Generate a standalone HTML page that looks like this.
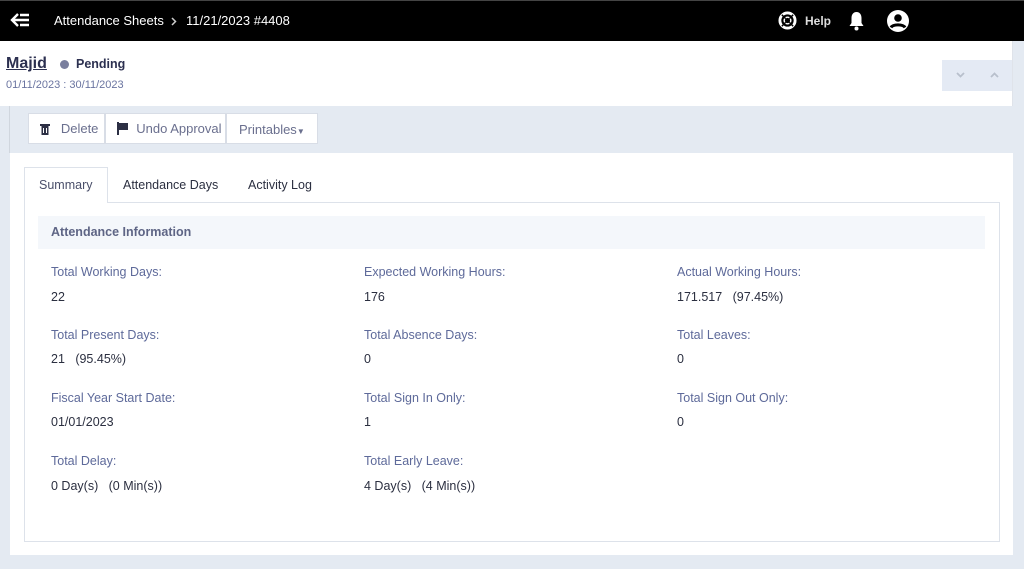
<!DOCTYPE html>
<html><head><style>
*{box-sizing:border-box;margin:0;padding:0}
body{width:1024px;height:569px;overflow:hidden;background:#e4eaf2;font-family:"Liberation Sans",sans-serif;position:relative}
.top{position:absolute;left:0;top:0;width:1024px;height:41px;background:#000;color:#fff;font-size:13px;border-top:1px solid #444}
.top span{position:absolute;top:12px}
.hdr{position:absolute;left:0;top:41px;width:1013px;height:65px;background:#fff;border-right:1px solid #dfe3ea}
.abs{position:absolute}
.btn{position:absolute;top:113px;height:31px;background:#fff;border:1px solid #d8dde6;color:#6a6f8e;font-size:13px;padding-top:7px}
.panel{position:absolute;left:10px;top:153px;width:1003px;height:402px;background:#fff}
.lbl{position:absolute;color:#5e6a9a;font-size:12.5px}
.val{position:absolute;color:#2b2f40;font-size:12.5px}
</style></head><body>
<div class="top">
<svg class="abs" style="left:10px;top:11px" width="20" height="16" viewBox="0 0 20 16"><path d="M8 2L2 8l6 6M2 8h17M10 3h9M10 13h9" stroke="#fff" stroke-width="2.4" fill="none"/></svg>
<span style="left:54px">Attendance Sheets</span>
<svg class="abs" style="left:171px;top:16px" width="6" height="9" viewBox="0 0 6 9"><path d="M1 1l3.5 3.5L1 8" stroke="#ccc" stroke-width="1.5" fill="none"/></svg>
<span style="left:186px">11/21/2023 #4408</span>
<svg class="abs" style="left:778px;top:10px" width="19" height="19" viewBox="0 0 20 20"><circle cx="10" cy="10" r="8" stroke="#fff" stroke-width="3" fill="none"/><circle cx="10" cy="10" r="3.5" fill="#000" stroke="#fff" stroke-width="1.5"/><path d="M4 4l4 4M16 4l-4 4M4 16l4-4M16 16l-4-4" stroke="#000" stroke-width="1.5"/></svg>
<span style="left:805px;font-size:12px;font-weight:bold;top:13px;color:#ddd">Help</span>
<svg class="abs" style="left:848px;top:10px" width="17" height="20" viewBox="0 0 17 20"><path d="M8.5 1C5 1 3.5 4 3.5 7v5L1.5 15h14l-2-3V7C13.5 4 12 1 8.5 1z" fill="#fff"/><circle cx="8.5" cy="17.5" r="2" fill="#fff"/></svg>
<svg class="abs" style="left:886px;top:8px" width="24" height="24" viewBox="0 0 24 24"><circle cx="12" cy="12" r="11" fill="#fff"/><circle cx="12" cy="9" r="3.8" fill="#000"/><path d="M5 18.5c2-3.5 12-3.5 14 0" stroke="#000" stroke-width="3" fill="none"/></svg>
</div>
<div class="hdr">
<div class="abs" style="left:6px;top:14px;font-size:16px;font-weight:bold;color:#2c3050;text-decoration:underline">Majid</div>
<div class="abs" style="left:60px;top:19px;width:9px;height:9px;border-radius:50%;background:#7a7f9e"></div>
<div class="abs" style="left:76px;top:16px;font-size:12.5px;font-weight:bold;color:#2c3050">Pending</div>
<div class="abs" style="left:6px;top:38px;font-size:11px;color:#6a74a0">01/11/2023 : 30/11/2023</div>
<div class="abs" style="left:942px;top:19px;width:70px;height:31px;background:#e4eaf4">
<svg class="abs" style="left:14px;top:12px" width="9" height="6" viewBox="0 0 9 6"><path d="M1 1l3.5 3.5L8 1" stroke="#b8c0cc" stroke-width="1.8" fill="none"/></svg>
<svg class="abs" style="left:48px;top:12px" width="9" height="6" viewBox="0 0 9 6"><path d="M1 5l3.5-3.5L8 5" stroke="#b8c0cc" stroke-width="1.8" fill="none"/></svg>
</div>
</div>
<div class="abs" style="left:9px;top:106px;width:1px;height:47px;background:#d0d6de"></div>
<div class="btn" style="left:28px;width:77px;padding-left:11px"><svg style="vertical-align:-2px" width="10" height="12" viewBox="0 0 10 12"><rect x="0" y="1" width="10" height="2" fill="#2c2f44"/><rect x="1.5" y="3" width="7" height="9" fill="#2c2f44"/><path d="M3.5 5v5M6.5 5v5" stroke="#fff"/></svg>&nbsp;&nbsp;&nbsp;Delete</div>
<div class="btn" style="left:105px;width:121px;padding-left:11px"><svg style="vertical-align:-2px" width="12" height="13" viewBox="0 0 12 13"><path d="M1 0v13" stroke="#2c2f44" stroke-width="2"/><path d="M2 1h9v7H2z" fill="#2c2f44"/></svg>&nbsp;&nbsp;Undo Approval</div>
<div class="btn" style="left:226px;width:92px;padding-left:12px;padding-top:8px">Printables<span style="font-size:8px">&#9660;</span></div>
<div class="panel">
<div class="abs" style="left:14px;top:14px;width:84px;height:36px;border:1px solid #dde2ea;border-bottom:none;background:#fff;z-index:2;font-size:12.5px;color:#4a4f6a;padding:10px 0 0 14px">Summary</div>
<div class="abs" style="left:113px;top:25px;font-size:12.5px;color:#2b2f40">Attendance Days</div>
<div class="abs" style="left:238px;top:25px;font-size:12.5px;color:#2b2f40">Activity Log</div>
<div class="abs" style="left:14px;top:49px;width:976px;height:340px;border:1px solid #dde2ea"></div>
<div class="abs" style="left:28px;top:63px;width:947px;height:33px;background:#f4f7fb;font-size:12.5px;font-weight:bold;color:#5e6585;padding:9px 0 0 13px">Attendance Information</div>
</div>
<div class="lbl" style="left:51px;top:265px">Total Working Days:</div><div class="val" style="left:51px;top:290px">22</div>
<div class="lbl" style="left:364px;top:265px">Expected Working Hours:</div><div class="val" style="left:364px;top:290px">176</div>
<div class="lbl" style="left:677px;top:265px">Actual Working Hours:</div><div class="val" style="left:677px;top:290px">171.517 &nbsp; (97.45%)</div>
<div class="lbl" style="left:51px;top:328px">Total Present Days:</div><div class="val" style="left:51px;top:352px">21 &nbsp; (95.45%)</div>
<div class="lbl" style="left:364px;top:328px">Total Absence Days:</div><div class="val" style="left:364px;top:352px">0</div>
<div class="lbl" style="left:677px;top:328px">Total Leaves:</div><div class="val" style="left:677px;top:352px">0</div>
<div class="lbl" style="left:51px;top:391px">Fiscal Year Start Date:</div><div class="val" style="left:51px;top:415px">01/01/2023</div>
<div class="lbl" style="left:364px;top:391px">Total Sign In Only:</div><div class="val" style="left:364px;top:415px">1</div>
<div class="lbl" style="left:677px;top:391px">Total Sign Out Only:</div><div class="val" style="left:677px;top:415px">0</div>
<div class="lbl" style="left:51px;top:454px">Total Delay:</div><div class="val" style="left:51px;top:479px">0 Day(s) &nbsp; (0 Min(s))</div>
<div class="lbl" style="left:364px;top:454px">Total Early Leave:</div><div class="val" style="left:364px;top:479px">4 Day(s) &nbsp; (4 Min(s))</div>
</body></html>
